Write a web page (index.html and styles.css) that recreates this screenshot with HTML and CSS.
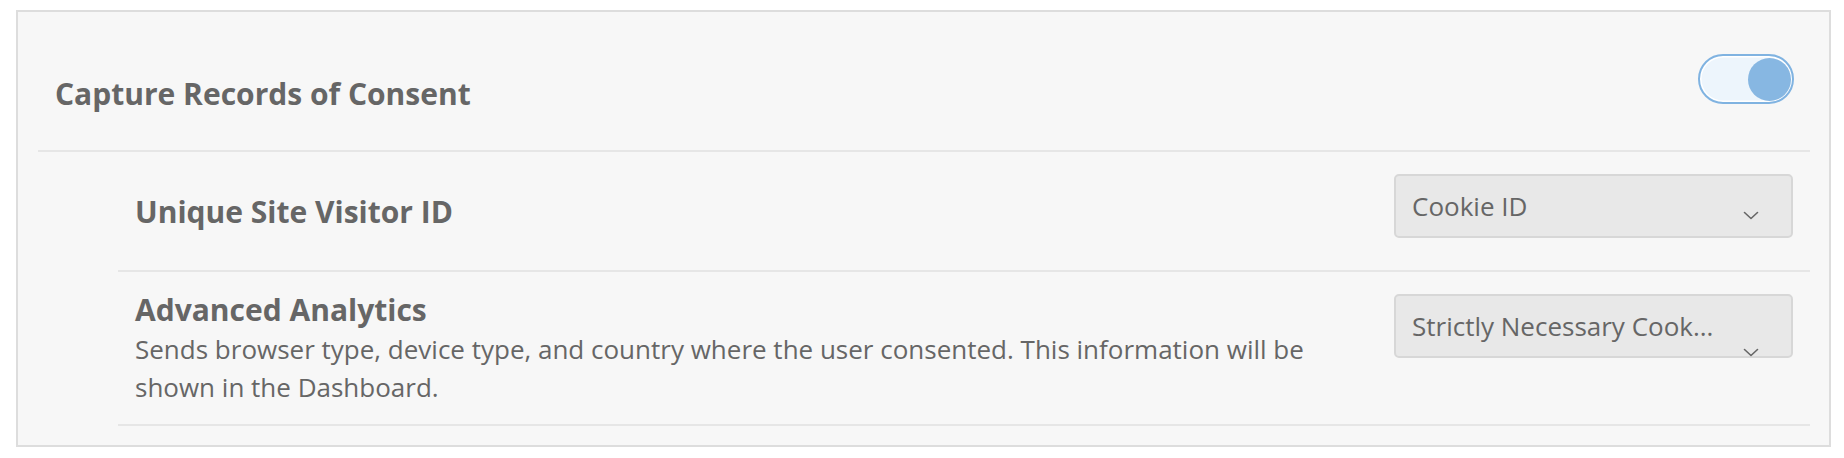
FILE: index.html
```html
<!DOCTYPE html>
<html lang="en">
<head>
<meta charset="utf-8">
<title>Capture Records of Consent</title>
<link rel="stylesheet" href="styles.css">
</head>
<body>
<section class="card">
  <header class="card-header">
    <h2 class="card-title">Capture Records of Consent</h2>
    <div class="toggle" role="switch" aria-checked="true"><span class="toggle-knob"></span></div>
  </header>
  <div class="rows">
    <div class="row">
      <div class="row-text">
        <h3 class="row-label">Unique Site Visitor ID</h3>
      </div>
      <div class="row-control">
        <div class="select"><span class="select-value">Cookie ID</span></div>
        <svg class="chevron" width="16" height="9" viewBox="0 0 16 9"><polyline points="1.5,1.5 8,7.5 14.5,1.5" fill="none" stroke="#666" stroke-width="1.6" stroke-linecap="round" stroke-linejoin="round"/></svg>
      </div>
    </div>
    <div class="row">
      <div class="row-text">
        <h3 class="row-label">Advanced Analytics</h3>
        <p class="row-desc">Sends browser type, device type, and country where the user consented. This information will be shown in the Dashboard.</p>
      </div>
      <div class="row-control">
        <div class="select"><span class="select-value">Strictly Necessary Cook...</span></div>
        <svg class="chevron" width="16" height="9" viewBox="0 0 16 9"><polyline points="1.5,1.5 8,7.5 14.5,1.5" fill="none" stroke="#666" stroke-width="1.6" stroke-linecap="round" stroke-linejoin="round"/></svg>
      </div>
    </div>
  </div>
</section>
</body>
</html>
```
FILE: styles.css
```css
* { box-sizing: border-box; }
html, body { margin: 0; padding: 0; background: #ffffff; }
body {
  font-family: "Open Sans", "Noto Sans", sans-serif;
  color: #666666;
}
.card {
  width: 1815px;
  margin: 10px 0 0 16px;
  background: #f7f7f7;
  border: 2px solid #dddddd;
  padding-bottom: 19px;
}
.card-header {
  display: flex;
  justify-content: space-between;
  align-items: flex-start;
  height: 140px;
  margin: 0 19px 0 20px;
  border-bottom: 2px solid #e6e6e6;
}
.card-title {
  margin: 64px 0 0 17px;
  font-size: 30px;
  line-height: 36px;
  font-weight: 700;
  color: #666666;
}
.toggle {
  position: relative;
  width: 96px;
  height: 50px;
  margin: 42px 16px 0 0;
  border: 2px solid #80b3e1;
  border-radius: 25px;
  background: #edf5fc;
  box-shadow: inset 0 0 0 1.5px #ffffff;
}
.toggle-knob {
  position: absolute;
  right: 1px;
  top: 1.5px;
  width: 43px;
  height: 43px;
  border-radius: 50%;
  background: #87b7e2;
}
.rows {
  margin: 0 19px 0 100px;
}
.row {
  display: flex;
  align-items: center;
  padding: 0 17px;
  border-bottom: 2px solid #e6e6e6;
}
.row-text {
  flex: 1;
  min-width: 0;
  padding: 20px 0 18px;
}
.row-label {
  margin: 0;
  font-size: 30px;
  line-height: 36px;
  font-weight: 700;
  color: #666666;
}
.row-desc {
  margin: 2px 0 0;
  font-size: 26px;
  line-height: 38px;
  font-weight: 400;
  color: #666666;
}
.row-control {
  position: relative;
  align-self: stretch;
  flex: 0 0 399px;
  margin-left: 60px;
  padding: 22px 0 32px;
}
.select {
  height: 64px;
  padding: 0 70px 0 16px;
  background: #e8e8e8;
  border: 2px solid #d7d7d7;
  border-radius: 5px;
  font-size: 26px;
  line-height: 60px;
  color: #666666;
  white-space: nowrap;
  overflow: hidden;
}
.chevron {
  position: absolute;
  right: 34px;
  top: 50%;
  display: block;
}
```
